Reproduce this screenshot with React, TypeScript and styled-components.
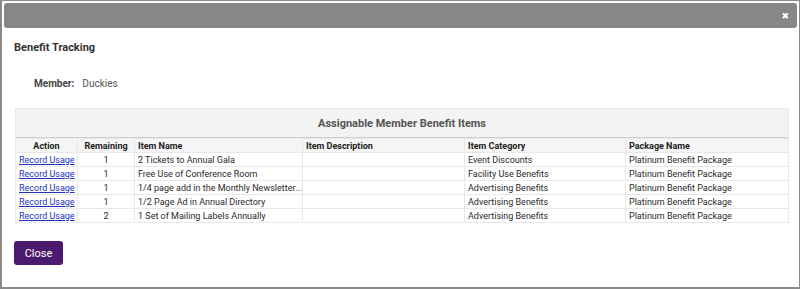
import React from "react";
import styled, { createGlobalStyle } from "styled-components";

const GlobalStyle = createGlobalStyle`
  html, body {
    margin: 0;
    padding: 0;
    background: #ffffff;
  }
  body {
    font-family: Roboto, "Liberation Sans", Arial, sans-serif;
  }
`;

type Item = {
  remaining: number;
  name: string;
  description: string;
  category: string;
  pkg: string;
};

const items: Item[] = [
  { remaining: 1, name: "2 Tickets to Annual Gala", description: "", category: "Event Discounts", pkg: "Platinum Benefit Package" },
  { remaining: 1, name: "Free Use of Conference Room", description: "", category: "Facility Use Benefits", pkg: "Platinum Benefit Package" },
  { remaining: 1, name: "1/4 page add in the Monthly Newsletter...", description: "", category: "Advertising Benefits", pkg: "Platinum Benefit Package" },
  { remaining: 1, name: "1/2 Page Ad in Annual Directory", description: "", category: "Advertising Benefits", pkg: "Platinum Benefit Package" },
  { remaining: 2, name: "1 Set of Mailing Labels Annually", description: "", category: "Advertising Benefits", pkg: "Platinum Benefit Package" },
];

const columns = [
  { label: "Action", width: 61, center: true },
  { label: "Remaining", width: 56, center: true },
  { label: "Item Name", width: 167 },
  { label: "Item Description", width: 161 },
  { label: "Item Category", width: 160 },
  { label: "Package Name", width: 162 },
];

const App = () => {
  return (
    <>
      <GlobalStyle />
      <Dialog>
        <TitleBar>
          <CloseX>✖</CloseX>
        </TitleBar>
        <Body>
          <Heading>Benefit Tracking</Heading>
          <MemberLine>
            <label>Member:</label>
            <span>Duckies</span>
          </MemberLine>
          <Table>
            <colgroup>
              {columns.map((c) => (
                <col key={c.label} style={{ width: c.width }} />
              ))}
            </colgroup>
            <thead>
              <tr>
                <Caption colSpan={6}>Assignable Member Benefit Items</Caption>
              </tr>
              <tr>
                {columns.map((c) => (
                  <HeadCell key={c.label} $center={c.center}>
                    {c.label}
                  </HeadCell>
                ))}
              </tr>
            </thead>
            <tbody>
              {items.map((it, i) => (
                <tr key={i}>
                  <Cell $center>
                    <RecordLink href="#">Record Usage</RecordLink>
                  </Cell>
                  <Cell $center>{it.remaining}</Cell>
                  <Cell>{it.name}</Cell>
                  <Cell>{it.description}</Cell>
                  <Cell>{it.category}</Cell>
                  <Cell>{it.pkg}</Cell>
                </tr>
              ))}
            </tbody>
          </Table>
          <CloseButton>Close</CloseButton>
        </Body>
      </Dialog>
    </>
  );
};

export default App;

const Dialog = styled.div`
  box-sizing: border-box;
  width: 800px;
  height: 289px;
  border: 1px solid #8a8a8a;
  border-left-width: 2px;
  border-bottom-width: 2px;
  padding: 2px;
  background: #ffffff;
`;

const TitleBar = styled.div`
  height: 25px;
  background: #878787;
  border-radius: 3px;
  display: flex;
  align-items: center;
  justify-content: flex-end;
  padding-right: 8px;
`;

const CloseX = styled.span`
  color: #ffffff;
  font-size: 9px;
  font-weight: bold;
  font-family: "DejaVu Sans", sans-serif;
`;

const Body = styled.div`
  padding: 13px 0 0 10px;
`;

const Heading = styled.div`
  font-size: 11px;
  font-weight: bold;
  color: #333333;
  line-height: 14px;
`;

const MemberLine = styled.div`
  margin: 22px 0 0 20px;
  font-size: 10px;
  line-height: 14px;
  color: #555555;

  label {
    font-weight: bold;
    color: #444444;
    margin-right: 8px;
  }
`;

const Table = styled.table`
  margin: 17px 0 0 1px;
  width: 774px;
  table-layout: fixed;
  border-collapse: separate;
  border-spacing: 1px;
  background: #e8e8e8;
  font-size: 9px;
  color: #2a2a2a;
`;

const Caption = styled.th`
  height: 28px;
  padding: 0;
  background: #f3f3f3;
  border-bottom: 1px solid #cfcfcf;
  font-size: 11px;
  font-weight: bold;
  color: #555555;
  text-align: center;
`;

const HeadCell = styled.th<{ $center?: boolean }>`
  height: 13px;
  padding: 0 3px;
  background: #f5f5f5;
  font-weight: bold;
  color: #222222;
  text-align: ${(p) => (p.$center ? "center" : "left")};
  white-space: nowrap;
`;

const Cell = styled.td<{ $center?: boolean }>`
  height: 13px;
  padding: 0 3px;
  background: #ffffff;
  text-align: ${(p) => (p.$center ? "center" : "left")};
  white-space: nowrap;
  overflow: hidden;
`;

const RecordLink = styled.a`
  color: #2233bb;
  text-decoration: underline;
`;

const CloseButton = styled.button`
  display: block;
  margin-top: 18px;
  width: 49px;
  height: 24px;
  border: none;
  border-radius: 3px;
  background: #4b1a6e;
  color: #ffffff;
  font-family: Roboto, "Liberation Sans", sans-serif;
  font-size: 11px;
  padding: 0;
`;
